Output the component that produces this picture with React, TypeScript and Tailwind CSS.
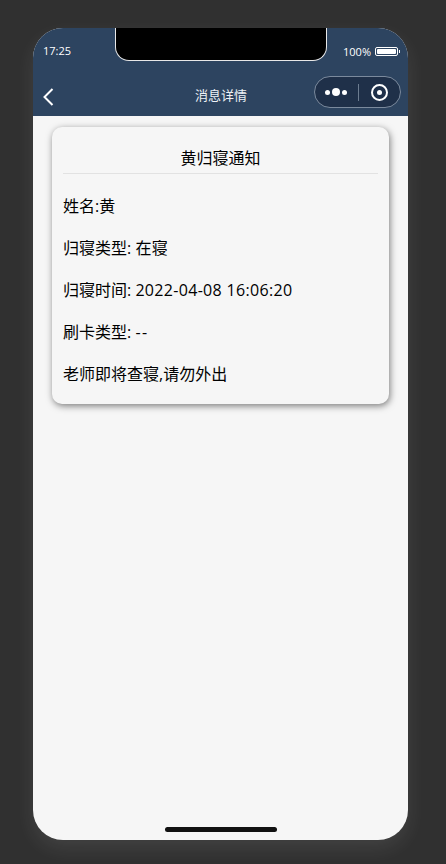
const rows = [
  { label: "姓名:黄" },
  { label: "归寝类型: ", value: "在寝" },
  { label: "归寝时间: ", value: "2022-04-08 16:06:20" },
  { label: "刷卡类型: ", value: "--", wide: true },
  { label: "老师即将查寝,请勿外出" },
];

export default function App() {
  return (
    <div className="h-[864px] w-full overflow-hidden bg-[#303030] pt-[28px] pl-[33px] font-['Open_Sans','Noto_Sans_CJK_SC',sans-serif]">
      <div className="relative flex h-[812px] w-[375px] flex-col overflow-hidden rounded-[30px] bg-[#f6f6f6] shadow-[0_8px_20px_rgba(255,255,255,0.09)]">
        {/* notch */}
        <div className="absolute left-[82px] top-0 h-[33px] w-[212px] rounded-b-[14px] border border-t-0 border-[#e8e8e8] bg-black" />

        <header className="h-[88px] shrink-0 bg-[#2d4460] text-white">
          <div className="flex h-[42px] items-start justify-between pr-[8px] pl-[10px] pt-[15px]">
            <span className="text-[11px] leading-[15px]">17:25</span>
            <div className="flex items-center gap-[4px] pt-[1px]">
              <span className="text-[11px] leading-[15px]">100%</span>
              <div className="flex items-center">
                <div className="h-[9px] w-[23px] rounded-[2px] border border-white p-[1px]">
                  <div className="h-full w-full rounded-[1px] bg-white" />
                </div>
                <div className="ml-[1px] h-[3px] w-[1px] bg-white" />
              </div>
            </div>
          </div>
          <div className="flex h-[46px] items-center pr-[7px] pl-[9px]">
            <svg width="12" height="18" viewBox="0 0 12 18" fill="none" stroke="currentColor" strokeWidth="2" className="mt-[7px]">
              <path d="M10.5 1 2.5 9l8 8" />
            </svg>
            <span className="mr-[67px] ml-auto mt-[4px] text-[13px] leading-[18px] text-[#eef2f6]">消息详情</span>
            <div className="mb-[2px] flex h-[32px] w-[87px] items-center rounded-full border border-[#7b8a9d] bg-[#1f3049]">
              <div className="flex w-[43px] items-center justify-center gap-[2px] pr-[1px]">
                <span className="h-[5px] w-[5px] rounded-full bg-white" />
                <span className="h-[8px] w-[8px] rounded-full bg-white" />
                <span className="h-[5px] w-[5px] rounded-full bg-white" />
              </div>
              <div className="h-[17px] w-px bg-[#6c7c90]" />
              <div className="flex flex-1 items-center justify-center">
                <div className="flex h-[17px] w-[17px] items-center justify-center rounded-full border-[2.5px] border-white">
                  <div className="h-[5px] w-[5px] rounded-full bg-white" />
                </div>
              </div>
            </div>
          </div>
        </header>

        <main className="flex-1 pt-[11px] pl-[19px]">
          <div className="h-[277px] w-[337px] rounded-[10px] bg-[#f6f6f6] px-[11px] shadow-[1px_2px_7px_rgba(0,0,0,0.5)]">
            <h1 className="border-b border-[#e2e2e2] pt-[20px] pb-[4px] text-center text-[16px] leading-[22px] text-black">
              黄归寝通知
            </h1>
            <div className="pt-[11px]">
              {rows.map((r) => (
                <p key={r.label} className="h-[41.9px] text-[16px] leading-[42px] text-black">
                  {r.label}
                  {r.value && (
                    <span className={r.wide ? "tracking-[1.6px]" : "tracking-[0.32px]"}>{r.value}</span>
                  )}
                </p>
              ))}
            </div>
          </div>
        </main>

        <div className="absolute bottom-[8px] left-[132px] h-[5px] w-[112px] rounded-full bg-[#111]" />
      </div>
    </div>
  );
}
